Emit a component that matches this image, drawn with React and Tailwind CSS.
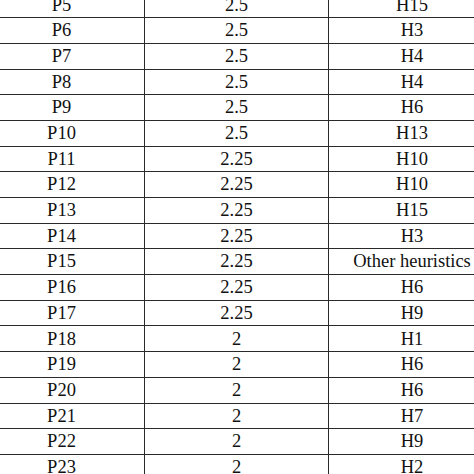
import React from "react";

const rows = [
  ["P5", "2.5", "H15"],
  ["P6", "2.5", "H3"],
  ["P7", "2.5", "H4"],
  ["P8", "2.5", "H4"],
  ["P9", "2.5", "H6"],
  ["P10", "2.5", "H13"],
  ["P11", "2.25", "H10"],
  ["P12", "2.25", "H10"],
  ["P13", "2.25", "H15"],
  ["P14", "2.25", "H3"],
  ["P15", "2.25", "Other heuristics"],
  ["P16", "2.25", "H6"],
  ["P17", "2.25", "H9"],
  ["P18", "2", "H1"],
  ["P19", "2", "H6"],
  ["P20", "2", "H6"],
  ["P21", "2", "H7"],
  ["P22", "2", "H9"],
  ["P23", "2", "H2"],
  ["P24", "2", "H3"],
];

const App = () => {
  return (
    <div className="w-[474px] h-[474px] overflow-hidden bg-white">
      <div
        className="mt-[-7.5px] ml-[-21px] w-[516px] text-[18.5px] text-[#111]"
        style={{ fontFamily: '"Liberation Serif", "Times New Roman", serif' }}
      >
        {rows.map(([p, score, h]) => (
          <div key={p} className="flex h-[25.7px] border-b-[1.5px] border-[#2a2a2a]">
            <div className="w-[166px] flex items-center justify-center border-r-[1.5px] border-[#2a2a2a] leading-none">
              {p}
            </div>
            <div className="w-[184px] flex items-center justify-center border-r-[1.5px] border-[#2a2a2a] leading-none">
              {score}
            </div>
            <div className="flex-1 flex items-center justify-center leading-none whitespace-nowrap">
              {h}
            </div>
          </div>
        ))}
      </div>
    </div>
  );
};

export default App;
